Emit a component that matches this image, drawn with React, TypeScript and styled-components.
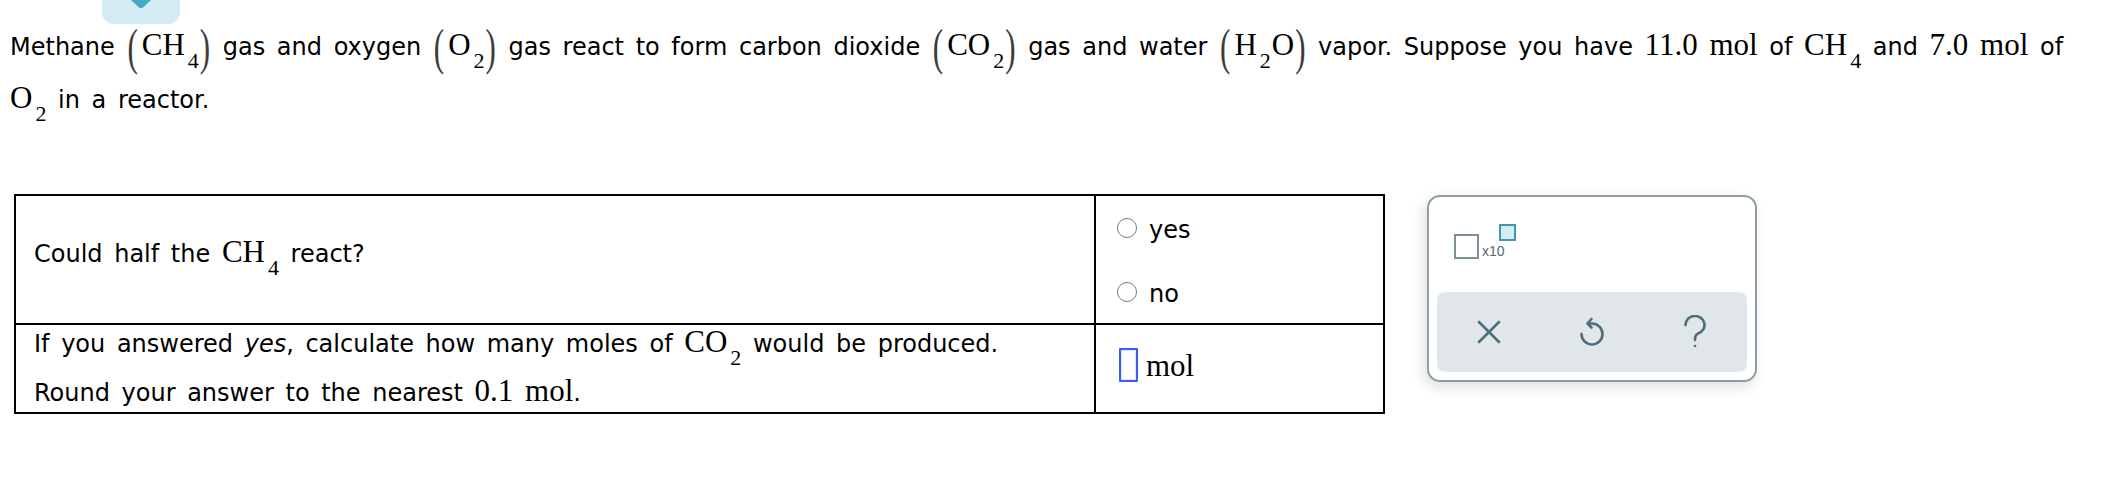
import React from "react";
import styled, { createGlobalStyle } from "styled-components";

const GlobalStyle = createGlobalStyle`
  html, body {
    margin: 0;
    padding: 0;
    background: #ffffff;
  }
  body {
    font-family: Verdana, "DejaVu Sans", sans-serif;
    color: #000000;
  }
`;

const Page = styled.div`
  padding-left: 10px;
  word-spacing: 4px;
`;

const TopTab = styled.div`
  margin-left: 92px;
  width: 78px;
  height: 24px;
  background: #d3ecf3;
  border-radius: 0 0 12px 12px;
  display: flex;
  justify-content: center;
  align-items: flex-start;
`;

const Intro = styled.p`
  margin: -3px 0 0;
  font-size: 24px;
  line-height: 53px;
  white-space: nowrap;
`;

const M = styled.span`
  font-family: "Liberation Serif", "Times New Roman", serif;
  font-size: 31px;
  line-height: 0;
`;

const Sub = styled.span<{ $after?: number }>`
  font-size: 22px;
  line-height: 0;
  vertical-align: -13px;
  margin-left: 3px;
  margin-right: ${(p) => p.$after ?? 0}px;
`;

const Paren = styled.span<{ $side: "open" | "close" }>`
  display: inline-block;
  font-family: "Liberation Serif", "Times New Roman", serif;
  font-size: 31px;
  line-height: 0;
  color: #3c3c3c;
  transform: translateY(2.5px) scaleY(1.63);
  margin-left: 1px;
  margin-right: ${(p) => (p.$side === "open" ? 4 : 1)}px;
`;

const Em = styled.em`
  font-style: italic;
`;

const Row = styled.div`
  display: flex;
  align-items: flex-start;
  gap: 42px;
  margin-top: 67px;
  margin-left: 4px;
`;

const Grid = styled.div`
  display: grid;
  grid-template-columns: 1078px 287px;
  grid-template-rows: 127px 87px;
  gap: 2px;
  padding: 2px;
  background: #000000;
`;

const PromptCell = styled.div<{ $lift?: number }>`
  background: #ffffff;
  display: flex;
  flex-direction: column;
  justify-content: center;
  gap: 13px;
  padding-left: 18px;
  padding-bottom: ${(p) => p.$lift ?? 0}px;
  font-size: 24px;
  white-space: nowrap;
`;

const TextLine = styled.div`
  line-height: 36px;
`;

const ChoiceCell = styled.div`
  background: #ffffff;
  display: flex;
  flex-direction: column;
  gap: 34px;
  padding: 19px 0 0 21px;
`;

const Option = styled.label`
  display: flex;
  align-items: center;
  gap: 12px;
  height: 30px;
  font-size: 24px;
  line-height: 30px;
`;

const RadioCircle = styled.span`
  width: 20px;
  height: 20px;
  box-sizing: border-box;
  border: 1.5px solid #777777;
  border-radius: 50%;
  background: #ffffff;
  margin-bottom: 4px;
`;

const AnswerCell = styled.div`
  background: #ffffff;
  display: flex;
  align-items: flex-start;
  padding: 23px 0 0 23px;
`;

const AnswerField = styled.div`
  display: flex;
  align-items: center;
  gap: 8px;
`;

const InputBox = styled.span`
  width: 19px;
  height: 34px;
  box-sizing: border-box;
  border: 2px solid #3b5cf6;
  box-shadow: inset 0 0 0 1px #dfe6ff;
  border-radius: 1px;
`;

const Unit = styled.span`
  font-family: "Liberation Serif", "Times New Roman", serif;
  font-size: 31px;
  line-height: 1;
`;

const Panel = styled.div`
  margin-top: 1px;
  width: 330px;
  box-sizing: border-box;
  border: 2px solid #8c9da5;
  border-radius: 13px;
  padding: 8px;
  background: #ffffff;
  box-shadow: -3px 5px 14px rgba(0, 0, 0, 0.13);
`;

const TopArea = styled.div`
  height: 87px;
  box-sizing: border-box;
  padding: 19px 0 0 17px;
`;

const ExpIcon = styled.div`
  display: inline-flex;
  height: 35px;
`;

const BaseBox = styled.span`
  align-self: flex-end;
  width: 25px;
  height: 25px;
  box-sizing: border-box;
  border: 2.5px solid #7e9199;
`;

const ExpLabel = styled.span`
  align-self: flex-end;
  margin: 0 0 1px 3px;
  font-family: "Liberation Sans", Arial, sans-serif;
  font-size: 14px;
  line-height: 1;
  color: #4f6873;
`;

const SupBox = styled.span`
  align-self: flex-start;
  margin-left: -6px;
  width: 17px;
  height: 17px;
  box-sizing: border-box;
  border: 2.5px solid #3d98b0;
  background: #d3edf3;
`;

const ButtonBar = styled.div`
  height: 80px;
  border-radius: 8px;
  background: #e1e6e9;
  display: grid;
  grid-template-columns: repeat(3, 1fr);
  align-items: center;
  justify-items: center;
`;

const IconButton = styled.button`
  border: 0;
  padding: 0;
  background: transparent;
  display: flex;
  align-items: center;
  justify-content: center;
  cursor: pointer;
  color: #4c6f7b;
`;

const Chevron = () => (
  <svg width="22" height="9" viewBox="0 0 22 9">
    <path d="M1 0 H21 L13.2 7.2 Q11 9 8.8 7.2 Z" fill="#47a7c5" />
  </svg>
);

const CloseIcon = () => (
  <svg width="24" height="24" viewBox="0 0 24 24" fill="none" stroke="currentColor" strokeWidth="2.6" strokeLinecap="round">
    <path d="M2 2 L22 22 M22 2 L2 22" />
  </svg>
);

const UndoIcon = () => (
  <svg width="30" height="32" viewBox="0 0 30 32" fill="none" stroke="currentColor" strokeWidth="2.6" strokeLinecap="round" strokeLinejoin="round">
    <path d="M11 7.5 H15 A10.5 10.5 0 1 1 4.5 18" />
    <path d="M14.5 3 L10.5 7.5 L14.5 11.5" />
  </svg>
);

const HelpIcon = () => (
  <svg width="26" height="34" viewBox="0 0 26 34" fill="none" stroke="currentColor" strokeWidth="2.6" strokeLinecap="round">
    <path d="M3.5 10 A9.5 9 0 1 1 16 18.5 C13.8 19.8 13 21 13 23.5 V25" />
    <circle cx="13" cy="31" r="1.3" fill="currentColor" stroke="none" />
  </svg>
);

const Open = () => <Paren $side="open">(</Paren>;
const Close = () => <Paren $side="close">)</Paren>;

export default function App() {
  return (
    <>
      <GlobalStyle />
      <Page>
        <TopTab>
          <Chevron />
        </TopTab>
        <Intro>
          Methane <Open />
          <M>
            CH<Sub>4</Sub>
          </M>
          <Close /> gas and oxygen <Open />
          <M>
            O<Sub>2</Sub>
          </M>
          <Close /> gas react to form carbon dioxide <Open />
          <M>
            CO<Sub>2</Sub>
          </M>
          <Close /> gas and water <Open />
          <M>
            H<Sub $after={1}>2</Sub>O
          </M>
          <Close /> vapor. Suppose you have <M>11.0 mol</M> of{" "}
          <M>
            CH<Sub>4</Sub>
          </M>{" "}
          and <M>7.0 mol</M> of
          <br />
          <M>
            O<Sub>2</Sub>
          </M>{" "}
          in a reactor.
        </Intro>
        <Row>
          <Grid>
            <PromptCell $lift={12}>
              <TextLine>
                Could half the{" "}
                <M>
                  CH<Sub>4</Sub>
                </M>{" "}
                react?
              </TextLine>
            </PromptCell>
            <ChoiceCell>
              <Option>
                <RadioCircle />
                yes
              </Option>
              <Option>
                <RadioCircle />
                no
              </Option>
            </ChoiceCell>
            <PromptCell>
              <TextLine>
                If you answered <Em>yes</Em>, calculate how many moles of{" "}
                <M>
                  CO<Sub>2</Sub>
                </M>{" "}
                would be produced.
              </TextLine>
              <TextLine>
                Round your answer to the nearest <M>0.1 mol</M>.
              </TextLine>
            </PromptCell>
            <AnswerCell>
              <AnswerField>
                <InputBox />
                <Unit>mol</Unit>
              </AnswerField>
            </AnswerCell>
          </Grid>
          <Panel>
            <TopArea>
              <ExpIcon>
                <BaseBox />
                <ExpLabel>x10</ExpLabel>
                <SupBox />
              </ExpIcon>
            </TopArea>
            <ButtonBar>
              <IconButton aria-label="clear">
                <CloseIcon />
              </IconButton>
              <IconButton aria-label="undo">
                <UndoIcon />
              </IconButton>
              <IconButton aria-label="help">
                <HelpIcon />
              </IconButton>
            </ButtonBar>
          </Panel>
        </Row>
      </Page>
    </>
  );
}
